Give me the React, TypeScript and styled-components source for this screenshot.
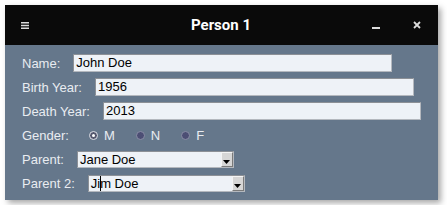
import styled, { createGlobalStyle } from "styled-components";

const Global = createGlobalStyle`
  html, body {
    margin: 0;
    padding: 0;
    background: #ffffff;
  }
  body {
    font-family: "Liberation Sans", Arial, sans-serif;
  }
`;

const Page = styled.div`
  padding: 5px;
`;

const Window = styled.div`
  width: 433px;
  height: 195px;
  background: #65778b;
  box-shadow: 3px 3px 6px rgba(0, 0, 0, 0.35);
  display: flex;
  flex-direction: column;
`;

const TitleBar = styled.div`
  height: 40px;
  background: #0a0a0a;
  display: flex;
  align-items: center;
  padding: 0 17px 0 16px;
`;

const Side = styled.div<{ $end?: boolean }>`
  width: 60px;
  display: flex;
  align-items: center;
  justify-content: ${(p) => (p.$end ? "flex-end" : "flex-start")};
  gap: 33px;
`;

const Title = styled.div`
  flex: 1;
  text-align: center;
  font-family: Roboto, "Liberation Sans", sans-serif;
  font-weight: 700;
  font-size: 15px;
  color: #ffffff;
`;

const Body = styled.div`
  padding: 6px 17px 0 17px;
  display: flex;
  flex-direction: column;
`;

const Row = styled.div`
  height: 24px;
  display: flex;
  align-items: center;
`;

const Label = styled.span<{ $gap?: number }>`
  font-size: 13px;
  color: #e9ecf1;
  margin-right: ${(p) => p.$gap ?? 13}px;
  white-space: nowrap;
`;

const TextInput = styled.div`
  width: 319px;
  height: 18px;
  box-sizing: border-box;
  background: #eef2f7;
  border: 1px solid #b4b8be;
  border-top-color: #8c9096;
  border-left-color: #8c9096;
  padding: 0 2px;
  font-size: 13px;
  line-height: 16px;
  color: #000;
`;

const Radio = styled.label`
  display: flex;
  align-items: center;
  margin-right: 21px;
  font-size: 13px;
  color: #e9ecf1;
`;

const Dot = styled.span<{ $on?: boolean }>`
  flex: none;
  width: 9px;
  height: 9px;
  border-radius: 50%;
  box-sizing: border-box;
  margin-right: 6px;
  background: ${(p) => (p.$on ? "#55586e" : "#4c4e74")};
  border: 1px solid ${(p) => (p.$on ? "#dfe1e8" : "#8a8ea6")};
  display: flex;
  align-items: center;
  justify-content: center;
  &::after {
    content: "";
    width: 3px;
    height: 3px;
    border-radius: 50%;
    background: #ffffff;
    display: ${(p) => (p.$on ? "block" : "none")};
  }
`;

const Combo = styled.div`
  width: 157px;
  height: 17px;
  box-sizing: border-box;
  background: #eef2f7;
  border: 1px solid #b4b8be;
  border-top-color: #8c9096;
  border-left-color: #8c9096;
  display: flex;
  align-items: stretch;
`;

const ComboText = styled.div`
  flex: 1;
  padding: 0 2px;
  font-size: 13px;
  line-height: 15px;
  color: #000;
`;

const Caret = styled.span`
  display: inline-block;
  width: 1px;
  height: 15px;
  background: #000;
  margin-right: -1px;
  vertical-align: top;
`;

const Arrow = styled.div`
  width: 12px;
  box-sizing: border-box;
  background: #d6d6d6;
  border: 1px solid;
  border-color: #f4f4f4 #7a7a7a #7a7a7a #f4f4f4;
  display: flex;
  align-items: flex-end;
  justify-content: center;
  padding-bottom: 2px;
`;

const DownArrow = () => (
  <svg width="7" height="4" viewBox="0 0 7 4">
    <path d="M0 0 H7 L3.5 4 Z" fill="#000" />
  </svg>
);

export default function App() {
  return (
    <Page>
      <Global />
      <Window>
        <TitleBar>
          <Side>
            <svg width="8" height="7" viewBox="0 0 8 7">
              <rect x="0" y="0" width="8" height="1.5" fill="#dcdcdc" />
              <rect x="0" y="2.75" width="8" height="1.5" fill="#dcdcdc" />
              <rect x="0" y="5.5" width="8" height="1.5" fill="#dcdcdc" />
            </svg>
          </Side>
          <Title>Person 1</Title>
          <Side $end>
            <svg width="8" height="8" viewBox="0 0 8 8">
              <rect x="0" y="6" width="8" height="2" fill="#dcdcdc" />
            </svg>
            <svg width="8" height="8" viewBox="0 0 8 8">
              <path d="M1 1 L7 7 M7 1 L1 7" stroke="#dcdcdc" strokeWidth="1.8" />
            </svg>
          </Side>
        </TitleBar>
        <Body>
          <Row>
            <Label>Name:</Label>
            <TextInput>John Doe</TextInput>
          </Row>
          <Row>
            <Label>Birth Year:</Label>
            <TextInput>1956</TextInput>
          </Row>
          <Row>
            <Label>Death Year:</Label>
            <TextInput>2013</TextInput>
          </Row>
          <Row>
            <Label $gap={20}>Gender:</Label>
            <Radio>
              <Dot $on />M
            </Radio>
            <Radio>
              <Dot />N
            </Radio>
            <Radio>
              <Dot />F
            </Radio>
          </Row>
          <Row>
            <Label>Parent:</Label>
            <Combo>
              <ComboText>Jane Doe</ComboText>
              <Arrow>
                <DownArrow />
              </Arrow>
            </Combo>
          </Row>
          <Row>
            <Label>Parent 2:</Label>
            <Combo>
              <ComboText>
                Ji
                <Caret />m Doe
              </ComboText>
              <Arrow>
                <DownArrow />
              </Arrow>
            </Combo>
          </Row>
        </Body>
      </Window>
    </Page>
  );
}
